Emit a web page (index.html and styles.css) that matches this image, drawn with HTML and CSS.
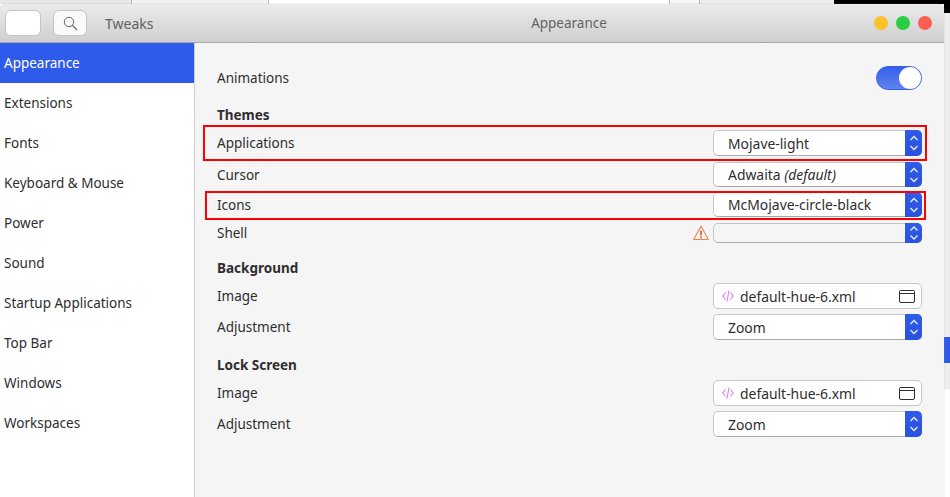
FILE: index.html
```html
<!DOCTYPE html>
<html lang="en">
<head>
    <meta charset="UTF-8">
    <meta name="viewport" content="width=device-width, initial-scale=1.0">
    <title>Tweaks - Appearance</title>
    <link rel="stylesheet" href="styles.css">
</head>
<body>
    <div class="desktop-strip">
        <span class="strip-tab strip-a"></span>
        <span class="strip-tab strip-b"></span>
        <span class="strip-tab strip-c"></span>
        <span class="strip-tab strip-d"></span>
        <span class="strip-black"></span>
    </div>
    <div class="desktop-side">
        <span class="side-black"></span>
        <span class="side-blue"></span>
    </div>

    <div class="window">
        <header class="titlebar">
            <div class="title-left">
                <button class="tb-btn tb-blank"></button>
                <button class="tb-btn tb-search">
                    <svg width="16" height="16" viewBox="0 0 16 16"><circle cx="7" cy="7" r="4.7" fill="none" stroke="#666" stroke-width="1"/><path d="M10.4 10.4 L15 15" stroke="#666" stroke-width="1.2" fill="none"/></svg>
                </button>
                <span class="app-name">Tweaks</span>
            </div>
            <div class="title-center">Appearance</div>
            <div class="lights">
                <span class="light yellow"></span>
                <span class="light green"></span>
                <span class="light red"></span>
            </div>
        </header>
        <div class="main">
            <nav class="sidebar">
                <a class="active" href="#">Appearance</a>
                <a href="#">Extensions</a>
                <a href="#">Fonts</a>
                <a href="#">Keyboard &amp; Mouse</a>
                <a href="#">Power</a>
                <a href="#">Sound</a>
                <a href="#">Startup Applications</a>
                <a href="#">Top Bar</a>
                <a href="#">Windows</a>
                <a href="#">Workspaces</a>
            </nav>
            <section class="content">
                <div class="row row-anim">
                    <span>Animations</span>
                    <span class="switch"><span class="knob"></span></span>
                </div>

                <h2 class="heading h-themes">Themes</h2>
                <div class="row row-apps">
                    <span>Applications</span>
                    <div class="combo"><span class="combo-text">Mojave-light</span><span class="spin"><svg width="10" height="18" viewBox="0 0 10 18"><path d="M1.5 6 L5 2.5 L8.5 6 M1.5 12 L5 15.5 L8.5 12" fill="none" stroke="#e6ebfc" stroke-width="1.4"/></svg></span></div>
                    <span class="redbox box-apps"></span>
                </div>
                <div class="row row-cursor">
                    <span>Cursor</span>
                    <div class="combo"><span class="combo-text">Adwaita <i>(default)</i></span><span class="spin"><svg width="10" height="18" viewBox="0 0 10 18"><path d="M1.5 6 L5 2.5 L8.5 6 M1.5 12 L5 15.5 L8.5 12" fill="none" stroke="#e6ebfc" stroke-width="1.4"/></svg></span></div>
                </div>
                <div class="row row-icons">
                    <span>Icons</span>
                    <div class="combo"><span class="combo-text">McMojave-circle-black</span><span class="spin"><svg width="10" height="18" viewBox="0 0 10 18"><path d="M1.5 6 L5 2.5 L8.5 6 M1.5 12 L5 15.5 L8.5 12" fill="none" stroke="#e6ebfc" stroke-width="1.4"/></svg></span></div>
                    <span class="redbox box-icons"></span>
                </div>
                <div class="row row-shell">
                    <span>Shell</span>
                    <div class="shell-right">
                        <svg class="warn" width="16" height="16" viewBox="0 0 16 16"><path d="M8 1 L15.3 14.5 H0.7 Z" fill="none" stroke="#f0824a" stroke-width="1.1" stroke-linejoin="round"/><path d="M8 5.5 V10.5 M8 11.6 V13.2" stroke="#e9683a" stroke-width="1.8" fill="none"/></svg>
                        <div class="combo combo-empty"><span class="combo-text"></span><span class="spin"><svg width="10" height="16" viewBox="0 0 10 16"><path d="M1.5 5.5 L5 2 L8.5 5.5 M1.5 10.5 L5 14 L8.5 10.5" fill="none" stroke="#e6ebfc" stroke-width="1.4"/></svg></span></div>
                    </div>
                </div>

                <h2 class="heading h-section">Background</h2>
                <div class="row row-image">
                    <span>Image</span>
                    <div class="file-btn">
                        <svg class="xml" width="12" height="14" viewBox="0 0 12 14"><path d="M3.5 3.5 L0.8 7 L3.5 10.5 M8.5 3.5 L11.2 7 L8.5 10.5 M7 1.5 L5 12.5" fill="none" stroke="#d67fe8" stroke-width="1.1"/></svg>
                        <span class="file-name">default-hue-6.xml</span>
                        <svg class="folder" width="16" height="13" viewBox="0 0 16 13"><path d="M1.5 0.5 H14.5 Q15.5 0.5 15.5 1.5 V11 Q15.5 12.5 14 12.5 H2 Q0.5 12.5 0.5 11 V1.5 Q0.5 0.5 1.5 0.5 Z M0.5 3.5 H15.5" fill="none" stroke="#2e2e2e" stroke-width="1"/></svg>
                    </div>
                </div>
                <div class="row row-adjust">
                    <span>Adjustment</span>
                    <div class="combo"><span class="combo-text">Zoom</span><span class="spin"><svg width="10" height="18" viewBox="0 0 10 18"><path d="M1.5 6 L5 2.5 L8.5 6 M1.5 12 L5 15.5 L8.5 12" fill="none" stroke="#e6ebfc" stroke-width="1.4"/></svg></span></div>
                </div>

                <h2 class="heading h-section">Lock Screen</h2>
                <div class="row row-image">
                    <span>Image</span>
                    <div class="file-btn">
                        <svg class="xml" width="12" height="14" viewBox="0 0 12 14"><path d="M3.5 3.5 L0.8 7 L3.5 10.5 M8.5 3.5 L11.2 7 L8.5 10.5 M7 1.5 L5 12.5" fill="none" stroke="#d67fe8" stroke-width="1.1"/></svg>
                        <span class="file-name">default-hue-6.xml</span>
                        <svg class="folder" width="16" height="13" viewBox="0 0 16 13"><path d="M1.5 0.5 H14.5 Q15.5 0.5 15.5 1.5 V11 Q15.5 12.5 14 12.5 H2 Q0.5 12.5 0.5 11 V1.5 Q0.5 0.5 1.5 0.5 Z M0.5 3.5 H15.5" fill="none" stroke="#2e2e2e" stroke-width="1"/></svg>
                    </div>
                </div>
                <div class="row row-adjust">
                    <span>Adjustment</span>
                    <div class="combo"><span class="combo-text">Zoom</span><span class="spin"><svg width="10" height="18" viewBox="0 0 10 18"><path d="M1.5 6 L5 2.5 L8.5 6 M1.5 12 L5 15.5 L8.5 12" fill="none" stroke="#e6ebfc" stroke-width="1.4"/></svg></span></div>
                </div>
            </section>
        </div>
    </div>
</body>
</html>
```

FILE: styles.css
```css
html, body {
    height: 100%;
}
body {
    margin: 0;
    position: relative;
    overflow: hidden;
    background-color: #fff;
    font-family: "Noto Sans", sans-serif;
    font-size: 13.5px;
    color: #2e2e2e;
}
.desktop-strip {
    position: absolute;
    left: 0;
    top: 0;
    width: 950px;
    height: 4px;
    background-color: #ececec;
}
.strip-tab {
    position: absolute;
    top: 0;
    height: 4px;
    box-sizing: border-box;
    border-right: 1px solid #bbb;
}
.strip-a { left: 0; width: 132px; background-color: #e6e6e6; }
.strip-b { left: 132px; width: 137px; background-color: #f2f2f2; }
.strip-c { left: 269px; width: 401px; background-color: #fff; }
.strip-d { left: 670px; width: 30px; background-color: #f6f6f6; }
.strip-black {
    position: absolute;
    left: 834px;
    top: 0;
    width: 116px;
    height: 4px;
    background-color: #000;
}
.desktop-side {
    position: absolute;
    left: 944px;
    top: 4px;
    width: 6px;
    height: 385px;
    background-color: #eee;
}
.side-black {
    position: absolute;
    left: 0;
    top: 0;
    width: 6px;
    height: 9px;
    background-color: #000;
}
.side-blue {
    position: absolute;
    left: 0;
    top: 333px;
    width: 6px;
    height: 26px;
    background-color: #2f5bea;
}
.window {
    position: absolute;
    left: 0;
    top: 4px;
    width: 944px;
    height: 493px;
    display: flex;
    flex-direction: column;
    background-color: #f5f5f5;
    border-radius: 6px 6px 0 0;
    overflow: hidden;
    box-shadow: 0 0 1px #999;
}
.titlebar {
    height: 38px;
    flex: none;
    display: flex;
    align-items: center;
    position: relative;
    background: linear-gradient(#ebebeb, #cfcfcf);
    border-bottom: 1px solid #a8a8a8;
}
.title-left {
    display: flex;
    align-items: center;
    padding-left: 5px;
}
.tb-btn {
    height: 26px;
    padding: 0;
    background-color: #fafafa;
    border: 1px solid #c4c4c4;
    border-radius: 6px;
    display: flex;
    align-items: center;
    justify-content: center;
}
.tb-blank {
    width: 36px;
    background-color: #fff;
}
.tb-search {
    width: 34px;
    margin-left: 12px;
}
.app-name {
    margin-left: 18px;
    font-size: 14px;
    color: #626262;
}
.title-center {
    position: absolute;
    left: 194px;
    right: 0;
    text-align: center;
    color: #626262;
}
.lights {
    margin-left: auto;
    display: flex;
    gap: 8px;
    padding-right: 12px;
}
.light {
    width: 14px;
    height: 14px;
    border-radius: 50%;
}
.yellow { background-color: #fdc12b; }
.green { background-color: #27cf42; }
.red { background-color: #fc5f52; }
.main {
    flex: 1;
    display: flex;
    min-height: 0;
}
.sidebar {
    width: 194px;
    flex: none;
    background-color: #fff;
    border-right: 1px solid #cfcfcf;
}
.sidebar a {
    display: block;
    height: 40px;
    line-height: 41px;
    padding-left: 4px;
    color: #2e2e2e;
    text-decoration: none;
}
.sidebar a.active {
    background-color: #2f5bea;
    color: #fff;
}
.content {
    flex: 1;
    padding: 0 22px;
    position: relative;
}
.row {
    display: flex;
    align-items: center;
    justify-content: space-between;
    position: relative;
}
.row-anim { height: 30px; margin-top: 20px; }
.row-apps { height: 26px; margin-top: 5px; }
.row-cursor { height: 25px; margin-top: 6px; }
.row-icons { height: 25px; margin-top: 5px; }
.row-shell { height: 20px; margin-top: 6px; }
.row-image { height: 26px; }
.row-adjust { height: 26px; margin-top: 5px; }
.heading {
    margin: 0;
    font-size: 13.5px;
    font-weight: 700;
    line-height: 20px;
}
.h-themes { margin-top: 12px; }
.h-section { margin-top: 15px; margin-bottom: 5px; }
.switch {
    width: 46px;
    height: 24px;
    box-sizing: border-box;
    border-radius: 12px;
    background: linear-gradient(#3560ea, #5f83ee);
    border: 1px solid #3560ea;
    display: flex;
    justify-content: flex-end;
}
.knob {
    width: 22px;
    height: 22px;
    border-radius: 50%;
    background-color: #fff;
}
.combo {
    width: 209px;
    height: 100%;
    box-sizing: border-box;
    display: flex;
    background-color: #fff;
    border: 1px solid #c6c6c6;
    border-bottom-color: #aaa;
    border-radius: 5px;
}
.combo-text {
    flex: 1;
    padding-left: 14px;
    align-self: center;
    font-size: 13.9px;
}
.combo-empty {
    background-color: #f5f5f5;
}
.spin {
    width: 17px;
    margin: -1px;
    flex: none;
    border-radius: 0 5px 5px 0;
    background: linear-gradient(#2f5bea, #2a52dc);
    display: flex;
    align-items: center;
    justify-content: center;
}
.shell-right {
    display: flex;
    align-items: center;
    gap: 4px;
    height: 100%;
}
.file-btn {
    width: 209px;
    height: 100%;
    box-sizing: border-box;
    display: flex;
    align-items: center;
    background-color: #fff;
    border: 1px solid #c6c6c6;
    border-radius: 5px;
    padding: 0 6px 0 8px;
}
.file-name {
    margin-left: 6px;
    flex: 1;
    font-size: 13.9px;
}
.redbox {
    position: absolute;
    border: 2px solid #f00;
    pointer-events: none;
}
.box-apps { left: -14px; right: -5px; top: -5px; bottom: -5px; }
.box-icons { left: -12px; right: -4px; top: -1px; bottom: -3px; }
```
